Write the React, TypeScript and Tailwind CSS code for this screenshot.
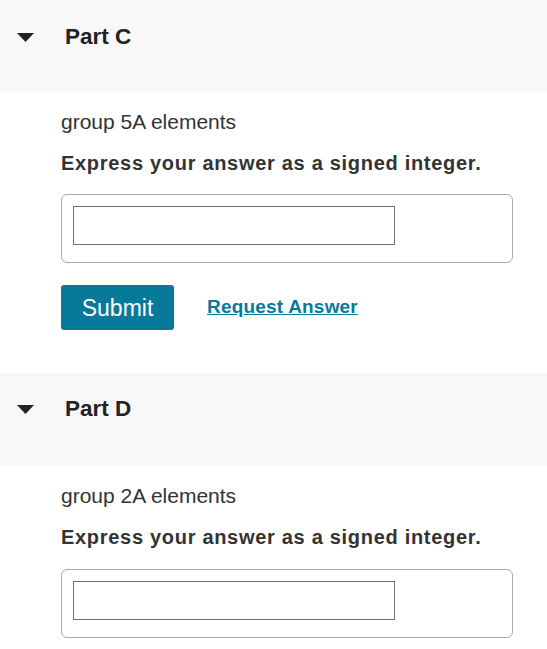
import React from "react";

function Caret() {
  return (
    <svg width="17" height="9" viewBox="0 0 17 9" className="shrink-0">
      <polygon points="0,0 17,0 8.5,9" fill="#222222" />
    </svg>
  );
}

function PartHeader({ label, h, pt }: { label: string; h: string; pt: string }) {
  return (
    <div className={`${h} ${pt} bg-[#f8f8f8] pl-[17px]`}>
      <div className="flex items-center gap-[31px] h-[26px]">
        <Caret />
        <span className="text-[22.5px] leading-[26px] font-bold text-[#222]">{label}</span>
      </div>
    </div>
  );
}

function AnswerBox({ mt }: { mt: string }) {
  return (
    <div className={`${mt} w-[452px] h-[69px] border border-[#aaaaaa] rounded-[6px] pl-[11px] pt-[11px]`}>
      <div className="w-[322px] h-[39px] border border-[#707070] bg-white"></div>
    </div>
  );
}

function Prompt({ group }: { group: string }) {
  return (
    <>
      <div className="pt-[18px] text-[21px] leading-[24px] text-[#333]">{group}</div>
      <div className="mt-[17px] text-[20px] leading-[24px] font-bold tracking-[0.7px] text-[#333]">
        Express your answer as a signed integer.
      </div>
    </>
  );
}

export default function App() {
  return (
    <div className="w-[547px] h-[649px] overflow-hidden bg-white font-['Liberation_Sans',Arial,sans-serif]">
      <PartHeader label="Part C" h="h-[92px]" pt="pt-[24px]" />
      <div className="pl-[61px] pb-[43px]">
        <Prompt group="group 5A elements" />
        <AnswerBox mt="mt-[19px]" />
        <div className="mt-[22px] flex items-center gap-[33px]">
          <button className="w-[113px] h-[45px] bg-[#077a99] rounded-[3px] text-white text-[23px] leading-[26px]">
            Submit
          </button>
          <a href="#" className="text-[19px] font-bold text-[#077a99] underline tracking-[0.2px]">
            Request Answer
          </a>
        </div>
      </div>
      <PartHeader label="Part D" h="h-[93px]" pt="pt-[23px]" />
      <div className="pl-[61px]">
        <Prompt group="group 2A elements" />
        <AnswerBox mt="mt-[20px]" />
      </div>
    </div>
  );
}
